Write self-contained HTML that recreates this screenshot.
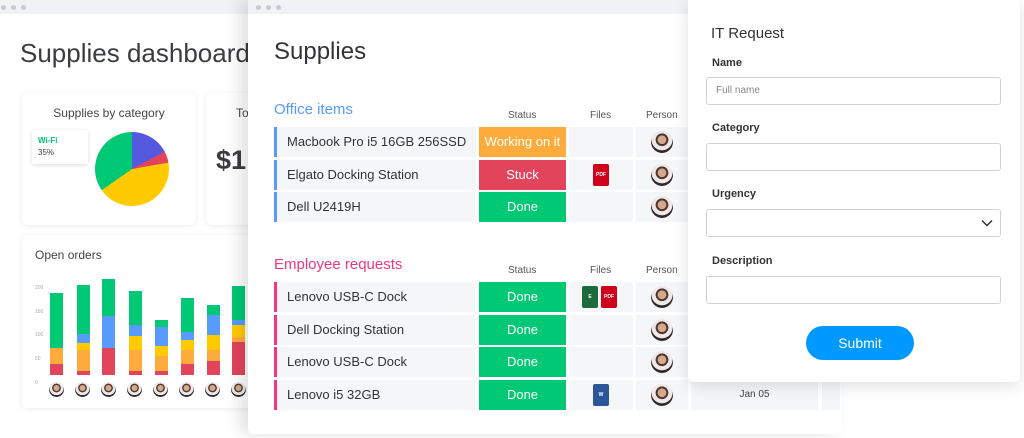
<!DOCTYPE html>
<html><head><style>
*{margin:0;padding:0;box-sizing:border-box}
body{width:1024px;height:438px;overflow:hidden;background:#fff;font-family:"Liberation Sans",sans-serif;position:relative;color:#323338}
.abs{position:absolute}
.win{position:absolute;background:#fff}
.bar{position:absolute;left:0;right:0;top:0;height:14px;background:#f1f2f6}
.dot{position:absolute;top:5px;width:5px;height:5px;border-radius:50%;background:#c9cbd3}
.card{position:absolute;background:#fff;border-radius:6px;box-shadow:0 1px 6px rgba(0,0,0,.08)}
.row{position:absolute;left:274px;height:30px}
.name{position:absolute;left:0;width:202px;height:30px;background:#f5f6f8;border-left:3px solid #579bfc;font-size:13px;line-height:30px;padding-left:10px;color:#323338}
.st{position:absolute;left:205px;width:87px;height:30px;color:#fff;font-size:13px;line-height:30px;text-align:center}
.fi{position:absolute;left:295px;width:64px;height:30px;background:#f5f6f8}
.pe{position:absolute;left:362px;width:52px;height:30px;background:#f5f6f8}
.av{position:absolute;left:15px;top:4px;width:22px;height:22px;border-radius:50%;background:radial-gradient(circle at 50% 40%,#d7a98a 0 24%,#4a3a32 26% 36%,#f0e8e8 38% 60%,#2e2a2a 62%)}
.hd{position:absolute;font-size:10px;color:#555}
.seg{position:absolute;left:0;right:0}
.bars>div{position:absolute;width:13px;top:0;bottom:0}
.lab{position:absolute;left:712px;font-size:11px;font-weight:bold;color:#333}
.inp{position:absolute;left:706px;width:295px;height:28px;border:1px solid #d0d2d8;border-radius:3px;background:#fff}
.doc{position:absolute;width:16px;height:22px;border-radius:2px;color:#fff;font-size:5px;font-weight:bold;text-align:center;line-height:22px}
</style></head><body>

<div class="win" style="left:0;top:0;width:262px;height:432px;">
 <div class="bar"></div><div class="dot" style="left:1px"></div><div class="dot" style="left:11px"></div><div class="dot" style="left:21px"></div>
 <div class="abs" style="left:20px;top:38px;font-size:26px;color:#3b3c40;white-space:nowrap">Supplies dashboards</div>
 <div class="card" style="left:22px;top:93px;width:174px;height:132px">
  <div class="abs" style="left:0;right:0;top:13px;text-align:center;font-size:12px;color:#444">Supplies by category</div>
  <div class="abs" style="left:73px;top:39px;width:74px;height:74px;border-radius:50%;background:conic-gradient(#5559df 0 62deg,#e2445c 62deg 80deg,#ffcb00 80deg 235deg,#00c875 235deg 360deg)"></div>
  <div class="abs" style="left:10px;top:37px;width:56px;height:34px;background:#fff;box-shadow:0 1px 4px rgba(0,0,0,.15);border-radius:2px">
   <div class="abs" style="left:6px;top:6px;font-size:8px;color:#00c875;font-weight:bold">Wi-Fi</div>
   <div class="abs" style="left:6px;top:18px;font-size:8px;color:#444">35%</div>
  </div>
 </div>
 <div class="card" style="left:206px;top:93px;width:80px;height:132px">
  <div class="abs" style="left:30px;top:13px;font-size:12px;color:#444">To</div>
  <div class="abs" style="left:10px;top:52px;font-size:27px;font-weight:bold;color:#3b3c40">$1</div>
 </div>
 <div class="card" style="left:22px;top:235px;width:260px;height:173px">
  <div class="abs" style="left:13px;top:13px;font-size:12px;color:#444">Open orders</div>
  <div class="abs" style="left:13px;top:42px;font-size:5px;color:#aaa;line-height:23.7px">200<br>150<br>100<br>50<br>0</div>
 </div>
 <div class="abs bars" style="left:0;top:279px;width:250px;height:96px">
  <div style="left:50px"><div class="seg" style="top:14px;height:55px;background:#00c875"></div><div class="seg" style="top:69px;height:16px;background:#fdab3d"></div><div class="seg" style="top:85px;height:11px;background:#e2445c"></div></div>
  <div style="left:77px"><div class="seg" style="top:6px;height:49px;background:#00c875"></div><div class="seg" style="top:55px;height:9px;background:#579bfc"></div><div class="seg" style="top:64px;height:7px;background:#ffcb00"></div><div class="seg" style="top:71px;height:21px;background:#fdab3d"></div><div class="seg" style="top:92px;height:4px;background:#e2445c"></div></div>
  <div style="left:102px"><div class="seg" style="top:0;height:37px;background:#00c875"></div><div class="seg" style="top:37px;height:32px;background:#579bfc"></div><div class="seg" style="top:69px;height:27px;background:#e2445c"></div></div>
  <div style="left:129px"><div class="seg" style="top:12px;height:34px;background:#00c875"></div><div class="seg" style="top:46px;height:11px;background:#579bfc"></div><div class="seg" style="top:57px;height:14px;background:#ffcb00"></div><div class="seg" style="top:71px;height:21px;background:#fdab3d"></div><div class="seg" style="top:92px;height:4px;background:#e2445c"></div></div>
  <div style="left:155px"><div class="seg" style="top:41px;height:7px;background:#00c875"></div><div class="seg" style="top:48px;height:19px;background:#579bfc"></div><div class="seg" style="top:67px;height:10px;background:#ffcb00"></div><div class="seg" style="top:77px;height:15px;background:#fdab3d"></div><div class="seg" style="top:92px;height:4px;background:#e2445c"></div></div>
  <div style="left:181px"><div class="seg" style="top:19px;height:34px;background:#00c875"></div><div class="seg" style="top:53px;height:8px;background:#579bfc"></div><div class="seg" style="top:61px;height:10px;background:#ffcb00"></div><div class="seg" style="top:71px;height:14px;background:#fdab3d"></div><div class="seg" style="top:85px;height:11px;background:#e2445c"></div></div>
  <div style="left:207px"><div class="seg" style="top:26px;height:10px;background:#00c875"></div><div class="seg" style="top:36px;height:20px;background:#579bfc"></div><div class="seg" style="top:56px;height:15px;background:#ffcb00"></div><div class="seg" style="top:71px;height:11px;background:#fdab3d"></div><div class="seg" style="top:82px;height:14px;background:#e2445c"></div></div>
  <div style="left:232px"><div class="seg" style="top:7px;height:34px;background:#00c875"></div><div class="seg" style="top:41px;height:5px;background:#579bfc"></div><div class="seg" style="top:46px;height:12px;background:#ffcb00"></div><div class="seg" style="top:58px;height:5px;background:#fdab3d"></div><div class="seg" style="top:63px;height:33px;background:#e2445c"></div></div>
 </div>
 <div class="abs" style="left:49px;top:382px;width:200px;height:16px">
  <div class="av" style="left:0;top:0;width:15px;height:15px"></div><div class="av" style="left:26px;top:0;width:15px;height:15px"></div><div class="av" style="left:52px;top:0;width:15px;height:15px"></div><div class="av" style="left:78px;top:0;width:15px;height:15px"></div><div class="av" style="left:104px;top:0;width:15px;height:15px"></div><div class="av" style="left:130px;top:0;width:15px;height:15px"></div><div class="av" style="left:156px;top:0;width:15px;height:15px"></div><div class="av" style="left:182px;top:0;width:15px;height:15px"></div>
 </div>
</div>

<div class="win" style="left:248px;top:0;width:594px;height:434px;box-shadow:-8px 0 16px rgba(0,0,0,.12);border-radius:0 0 6px 6px">
 <div class="bar"></div><div class="dot" style="left:8px"></div><div class="dot" style="left:18px"></div><div class="dot" style="left:28px"></div>
 <div class="abs" style="left:26px;top:38px;font-size:24px;color:#323338">Supplies</div>
</div>
<div class="abs" style="left:274px;top:101px;font-size:15px;color:#579bfc">Office items</div>
<div class="abs" style="left:274px;top:256px;font-size:15px;color:#f2367f">Employee requests</div>
<div class="hd" style="left:508px;top:110px">Status</div><div class="hd" style="left:590px;top:110px">Files</div><div class="hd" style="left:646px;top:110px">Person</div>
<div class="hd" style="left:508px;top:265px">Status</div><div class="hd" style="left:590px;top:265px">Files</div><div class="hd" style="left:646px;top:265px">Person</div>

<div class="row" style="top:127px"><div class="name">Macbook Pro i5 16GB 256SSD</div><div class="st" style="background:#fdab3d">Working on it</div><div class="fi"></div><div class="pe"><div class="av"></div></div></div>
<div class="row" style="top:160px"><div class="name">Elgato Docking Station</div><div class="st" style="background:#e2445c">Stuck</div><div class="fi"><div class="doc" style="left:24px;top:4px;background:#d0021b">PDF</div></div><div class="pe"><div class="av"></div></div></div>
<div class="row" style="top:192px"><div class="name">Dell U2419H</div><div class="st" style="background:#00c875">Done</div><div class="fi"></div><div class="pe"><div class="av"></div></div></div>

<div class="row" style="top:282px"><div class="name" style="border-color:#f2367f">Lenovo USB-C Dock</div><div class="st" style="background:#00c875">Done</div><div class="fi"><div class="doc" style="left:13px;top:4px;background:#1d6b3c">E</div><div class="doc" style="left:32px;top:4px;background:#d0021b">PDF</div></div><div class="pe"><div class="av"></div></div></div>
<div class="row" style="top:315px"><div class="name" style="border-color:#f2367f">Dell Docking Station</div><div class="st" style="background:#00c875">Done</div><div class="fi"></div><div class="pe"><div class="av"></div></div></div>
<div class="row" style="top:347px"><div class="name" style="border-color:#f2367f">Lenovo USB-C Dock</div><div class="st" style="background:#00c875">Done</div><div class="fi"></div><div class="pe"><div class="av"></div></div></div>
<div class="row" style="top:380px"><div class="name" style="border-color:#f2367f">Lenovo i5 32GB</div><div class="st" style="background:#00c875">Done</div><div class="fi"><div class="doc" style="left:24px;top:4px;background:#2b579a">W</div></div><div class="pe"><div class="av"></div></div></div>
<div class="abs" style="left:691px;top:380px;width:127px;height:30px;background:#f5f6f8;font-size:10px;line-height:30px;text-align:center;color:#444">Jan 05</div>
<div class="abs" style="left:822px;top:380px;width:18px;height:30px;background:#f5f6f8"></div>

<div class="abs" style="left:688px;top:0;width:332px;height:382px;background:#fff;border-radius:0 0 6px 6px;box-shadow:0 4px 16px rgba(0,0,0,.12)"></div>
<div class="abs" style="left:711px;top:25px;font-size:15px;color:#333">IT Request</div>
<div class="lab" style="top:57px">Name</div>
<div class="inp" style="top:77px"><span class="abs" style="left:9px;top:7px;font-size:10px;color:#888">Full name</span></div>
<div class="lab" style="top:122px">Category</div>
<div class="inp" style="top:143px"></div>
<div class="lab" style="top:188px">Urgency</div>
<div class="inp" style="top:209px"><svg class="abs" style="left:274px;top:9px" width="12" height="8" viewBox="0 0 12 8"><path d="M1 1.5 6 6.5 11 1.5" fill="none" stroke="#333" stroke-width="1.5"/></svg></div>
<div class="lab" style="top:255px">Description</div>
<div class="inp" style="top:276px"></div>
<div class="abs" style="left:806px;top:326px;width:108px;height:34px;border-radius:17px;background:#0099ff;color:#fff;font-size:14px;line-height:34px;text-align:center">Submit</div>
</body></html>
